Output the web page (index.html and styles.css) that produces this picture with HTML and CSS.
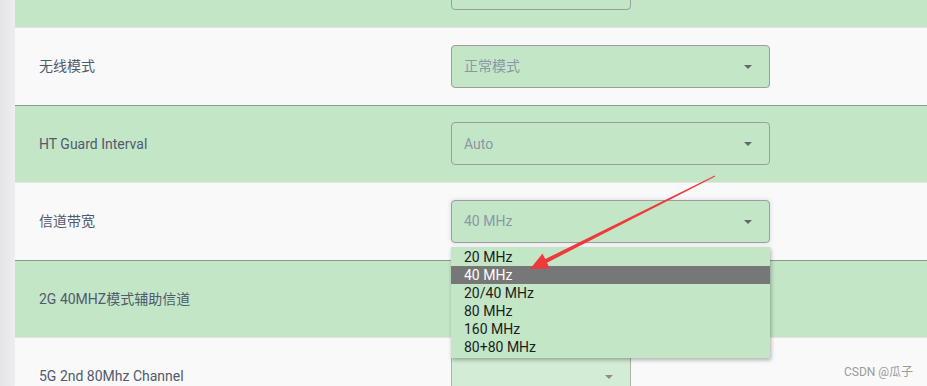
FILE: index.html
```html
<!DOCTYPE html>
<html lang="zh-CN">
<head>
    <meta charset="UTF-8" />
    <meta name="viewport" content="width=device-width, initial-scale=1.0" />
    <title>无线设置</title>
    <link rel="stylesheet" href="styles.css">
</head>
<body>
    <div class="page">
        <div class="sidebar"></div>
        <div class="content">
            <div class="list">
                <div class="row green">
                    <span class="label"></span>
                    <div class="select short"><span class="value"></span><span class="caret"></span></div>
                </div>
                <div class="row white">
                    <span class="label">无线模式</span>
                    <div class="select"><span class="value">正常模式</span><span class="caret"></span></div>
                </div>
                <div class="row green">
                    <span class="label">HT Guard Interval</span>
                    <div class="select"><span class="value">Auto</span><span class="caret"></span></div>
                </div>
                <div class="row white">
                    <span class="label">信道带宽</span>
                    <div class="select-wrap">
                        <div class="select focused"><span class="value">40 MHz</span><span class="caret"></span></div>
                        <ul class="dropdown">
                            <li>20 MHz</li>
                            <li class="selected">40 MHz</li>
                            <li>20/40 MHz</li>
                            <li>80 MHz</li>
                            <li>160 MHz</li>
                            <li>80+80 MHz</li>
                        </ul>
                    </div>
                </div>
                <div class="row green">
                    <span class="label">2G 40MHZ模式辅助信道</span>
                    <span></span>
                </div>
                <div class="row white">
                    <span class="label">5G 2nd 80Mhz Channel</span>
                    <div class="select short disabled"><span class="value"></span><span class="caret"></span></div>
                </div>
            </div>
        </div>
    </div>

    <svg class="annotation" width="927" height="386" viewBox="0 0 927 386">
        <polygon points="715.2,176.4 547.0,262.7 549.7,268.2 530,269 542.5,253.6 545.2,259.1 714.8,175.6" fill="#ee3a3a" />
    </svg>

    <div class="watermark">CSDN @瓜子</div>
</body>
</html>
```

FILE: styles.css
```css
body {
    margin: 0;
    font-family: Roboto, "Noto Sans CJK SC", sans-serif;
    background-color: #f9f9f9;
    overflow: hidden;
    height: 386px;
    position: relative;
}
.page {
    display: flex;
    height: 386px;
}
.sidebar {
    width: 15px;
    flex-shrink: 0;
    background: linear-gradient(to right, #e4e4e8, #eeeef1);
}
.content {
    flex: 1;
    overflow: hidden;
}
.list {
    margin-top: -49.5px;
}

.row {
    display: grid;
    grid-template-columns: 412px 319px;
    align-items: center;
    height: 77.5px;
    box-sizing: border-box;
    padding-left: 24px;
}
.row.green {
    background-color: #c3e6c7;
    border-bottom: 1px solid #e3e3e3;
}
.row.white {
    background-color: #f9f9f9;
    border-bottom: 1px solid #889a89;
}
.label {
    font-size: 14px;
    line-height: 18px;
    color: #515a6e;
}

.select-wrap {
    position: relative;
}
.select {
    position: relative;
    height: 43px;
    box-sizing: border-box;
    border: 1px solid #9b9e9b;
    border-radius: 4px;
    background-color: #c3e6c7;
    display: flex;
    align-items: center;
    padding-left: 12px;
}
.select.short {
    width: 180px;
}
.select.focused {
    box-shadow: 0 0 4px rgba(110, 110, 170, 0.25);
}
.select.disabled {
    background-color: #d3ecd5;
    border-color: #a9b3aa;
}
.value {
    font-size: 14px;
    line-height: 18px;
    color: #8b97a6;
}
.caret {
    position: absolute;
    right: 17px;
    top: 19px;
    width: 0;
    height: 0;
    border-left: 4px solid transparent;
    border-right: 4px solid transparent;
    border-top: 4px solid #666;
}
.select.disabled .caret {
    border-top-color: #8c8c8c;
}

.dropdown {
    position: absolute;
    left: 0;
    top: 47px;
    width: 319px;
    margin: 0;
    padding: 1px 0 2px;
    list-style: none;
    background-color: #c3e6c7;
    box-shadow: 1px 2px 4px rgba(0, 0, 0, 0.3);
    z-index: 10;
}
.dropdown li {
    height: 18px;
    line-height: 18px;
    padding-left: 13px;
    font-size: 14px;
    color: #1c1c1c;
}
.dropdown li.selected {
    background-color: #777777;
    color: #fff;
}

.annotation {
    position: absolute;
    left: 0;
    top: 0;
    pointer-events: none;
    z-index: 20;
}
.watermark {
    position: absolute;
    left: 844px;
    top: 362px;
    font-size: 12px;
    color: #9a9a9a;
    text-shadow: 0 0 2px #fff;
    z-index: 20;
}
```
